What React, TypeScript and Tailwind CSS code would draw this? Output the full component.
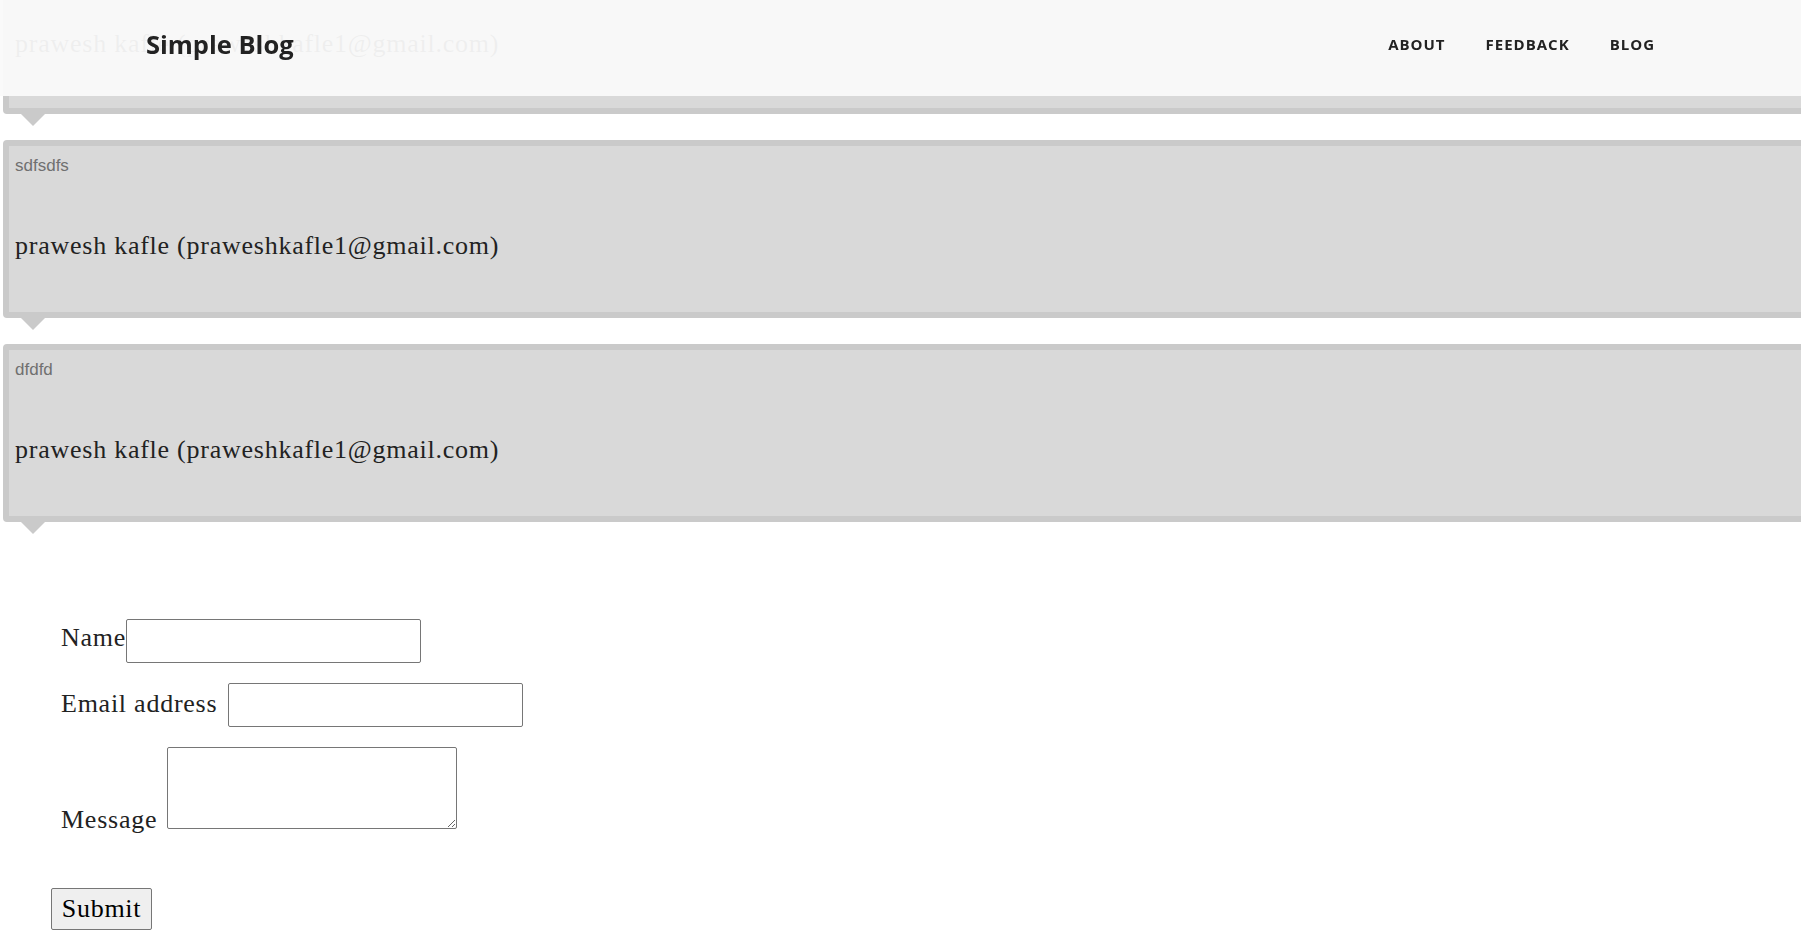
import React from "react";

const comments = [
  { id: 1, body: "sdfsdfs", first: true },
  { id: 2, body: "sdfsdfs" },
  { id: 3, body: "dfdfd" },
];

const author = "prawesh kafle (praweshkafle1@gmail.com)";

function Header() {
  return (
    <header className="fixed top-0 left-0 right-0 z-10 h-[96px] bg-[#fafafa]/95">
      <div className="flex h-full items-center justify-between pl-[146px] pr-[146px] pb-[8px] font-['Open_Sans',sans-serif] text-[#222]">
        <a className="text-[25.5px] font-bold leading-[32px]">Simple Blog</a>
        <nav className="flex items-center gap-[40px] text-[15px] font-bold uppercase tracking-[1px]">
          <a>About</a>
          <a>Feedback</a>
          <a>Blog</a>
        </nav>
      </div>
    </header>
  );
}

function CommentCard({ body, first }: { body: string; first?: boolean }) {
  return (
    <div className={first ? "-mt-[62px] pb-[14px]" : "pb-[14px]"}>
      <div
        className={
          "ml-[3px] -mr-[40px] rounded-[4px] border-[6px] border-[#cacaca] bg-[#d9d9d9] pl-[6px] pt-[11px] " +
          (first ? "pb-[46px]" : "pb-[48px]")
        }
      >
        <p className="font-['Liberation_Sans',Arial,sans-serif] text-[17px] leading-[18px] text-[#707070]">
          {body}
        </p>
        <p className="mt-[53px] font-['Liberation_Serif',serif] text-[26px] leading-[36px] tracking-[0.75px] text-[#222]">
          {author}
        </p>
      </div>
      <div className="ml-[21px] h-0 w-0 border-x-[12px] border-t-[12px] border-x-transparent border-t-[#cacaca]" />
    </div>
  );
}

function FeedbackForm() {
  return (
    <form
      className="pt-[71px] pl-[51px] font-['Liberation_Serif',serif] text-[26px] tracking-[0.75px] text-[#222]"
      onSubmit={(e) => e.preventDefault()}
    >
      <div className="flex items-start pl-[10px]">
        <label className="mt-[1px] w-[65px] whitespace-nowrap leading-[36px]">Name</label>
        <input className="h-[44px] w-[295px] rounded-[2px] border border-[#767676] bg-white px-1" />
      </div>
      <div className="mt-[20px] flex items-start pl-[10px]">
        <label className="mt-[3px] w-[167px] whitespace-nowrap leading-[36px]">Email address</label>
        <input className="h-[44px] w-[295px] rounded-[2px] border border-[#767676] bg-white px-1" />
      </div>
      <div className="mt-[20px] flex items-start pl-[10px]">
        <label className="mt-[55px] w-[106px] whitespace-nowrap leading-[36px]">Message</label>
        <textarea className="h-[82px] w-[290px] rounded-[2px] border border-[#767676] bg-white" />
      </div>
      <button
        type="submit"
        className="mt-[50px] h-[42px] w-[101px] rounded-[2px] border border-[#767676] bg-[#efefef] text-[26px] leading-[36px] text-black"
      >
        Submit
      </button>
    </form>
  );
}

export default function App() {
  return (
    <div className="h-[951px] w-full overflow-hidden bg-white">
      <Header />
      <main>
        {comments.map((c) => (
          <CommentCard key={c.id} body={c.body} first={c.first} />
        ))}
        <FeedbackForm />
      </main>
    </div>
  );
}
